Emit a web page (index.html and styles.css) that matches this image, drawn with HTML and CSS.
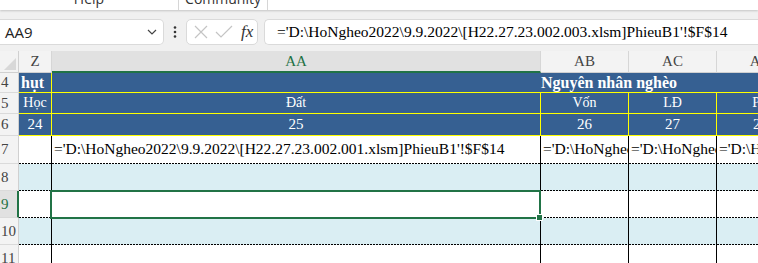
FILE: index.html
```html
<!DOCTYPE html>
<html lang="vi">
<head>
  <meta charset="UTF-8">
  <title>HoNgheo2022</title>
  <link rel="stylesheet" href="styles.css">
</head>
<body>
  <div class="ribbon-tail">
    <div class="tab tab-help"><span>Help</span></div>
    <div class="tab tab-community"><span>Community</span></div>
  </div>

  <div class="formula-bar">
    <div class="name-box">
      <span>AA9</span>
      <svg width="10" height="6" viewBox="0 0 10 6"><path d="M1 1 L5 5 L9 1" fill="none" stroke="#444" stroke-width="1.2"/></svg>
    </div>
    <div class="grip">
      <svg width="4" height="12" viewBox="0 0 4 12"><circle cx="2" cy="1.5" r="1.3" fill="#333"/><circle cx="2" cy="6" r="1.3" fill="#333"/><circle cx="2" cy="10.5" r="1.3" fill="#333"/></svg>
    </div>
    <div class="fx-box">
      <svg width="16" height="16" viewBox="0 0 16 16"><path d="M2 2 L14 14 M14 2 L2 14" stroke="#c4c4c4" stroke-width="1.2"/></svg>
      <svg width="18" height="16" viewBox="0 0 18 16"><path d="M1 8 L6 13 L17 2" fill="none" stroke="#c4c4c4" stroke-width="1.2"/></svg>
      <span class="fx">fx</span>
    </div>
    <div class="formula-input">='D:\HoNgheo2022\9.9.2022\[H22.27.23.002.003.xlsm]PhieuB1'!$F$14</div>
  </div>

  <div class="viewport">
    <div class="sheet">
      <div class="corner"></div>
      <div class="col-head">Z</div>
      <div class="col-head active">AA</div>
      <div class="col-head">AB</div>
      <div class="col-head">AC</div>
      <div class="col-head">AD</div>

      <div class="row-head">4</div>
      <div class="cell hdr bold left">hụt</div>
      <div class="cell hdr bold merged">Nguyên nhân nghèo</div>

      <div class="row-head">5</div>
      <div class="cell hdr">Học</div>
      <div class="cell hdr">Đất</div>
      <div class="cell hdr">Vốn</div>
      <div class="cell hdr">LĐ</div>
      <div class="cell hdr">PT</div>

      <div class="row-head">6</div>
      <div class="cell hdr num">24</div>
      <div class="cell hdr num">25</div>
      <div class="cell hdr num">26</div>
      <div class="cell hdr num">27</div>
      <div class="cell hdr num">28</div>

      <div class="row-head">7</div>
      <div class="cell data"></div>
      <div class="cell data">='D:\HoNgheo2022\9.9.2022\[H22.27.23.002.001.xlsm]PhieuB1'!$F$14</div>
      <div class="cell data">='D:\HoNgheo2022\9.9.2022\[H22.27.23.002.001.xlsm]PhieuB1'!$F$14</div>
      <div class="cell data">='D:\HoNgheo2022\9.9.2022\[H22.27.23.002.001.xlsm]PhieuB1'!$F$14</div>
      <div class="cell data">='D:\HoNgheo2022\9.9.2022\[H22.27.23.002.001.xlsm]PhieuB1'!$F$14</div>

      <div class="row-head">8</div>
      <div class="cell data band"></div>
      <div class="cell data band"></div>
      <div class="cell data band"></div>
      <div class="cell data band"></div>
      <div class="cell data band"></div>

      <div class="row-head active">9</div>
      <div class="cell data"></div>
      <div class="cell data selected"><span class="handle"></span></div>
      <div class="cell data"></div>
      <div class="cell data"></div>
      <div class="cell data"></div>

      <div class="row-head">10</div>
      <div class="cell data band"></div>
      <div class="cell data band"></div>
      <div class="cell data band"></div>
      <div class="cell data band"></div>
      <div class="cell data band"></div>

      <div class="row-head">11</div>
      <div class="cell data plain"></div>
      <div class="cell data plain"></div>
      <div class="cell data plain"></div>
      <div class="cell data plain"></div>
      <div class="cell data plain"></div>
    </div>
  </div>
</body>
</html>
```

FILE: styles.css
```css
body { margin: 0; width: 758px; height: 263px; overflow: hidden; background: #fff; font-family: "Liberation Serif", "Times New Roman", serif; }

.ribbon-tail { height: 10px; background: #fff; display: flex; overflow: hidden; box-shadow: 0 1px 2px rgba(0,0,0,0.18); position: relative; z-index: 1; }
.tab { height: 10px; display: flex; justify-content: center; overflow: hidden; border-right: 1px solid #d6d6d6; }
.tab span { font-family: "Open Sans", sans-serif; font-size: 14px; line-height: 14px; margin-top: -8px; color: #333; }
.tab-help { width: 178px; }
.tab-community { width: 88px; }

.formula-bar { height: 41px; background: #f0f0f0; display: flex; align-items: center; overflow: hidden; }
.name-box { width: 164px; height: 26px; box-sizing: border-box; background: #fff; border: 1px solid #dadada; border-left: none; border-radius: 0 5px 5px 0; display: flex; align-items: center; justify-content: space-between; padding: 0 6px 0 5px; font-family: "Open Sans", sans-serif; font-size: 15px; color: #222; margin-top: 2px; flex: none; }
.grip { width: 22px; display: flex; justify-content: center; margin-top: 2px; flex: none; }
.fx-box { width: 72px; height: 26px; box-sizing: border-box; background: #fff; border: 1px solid #dadada; border-radius: 5px; display: flex; align-items: center; gap: 6px; padding-left: 6px; margin-top: 2px; flex: none; }
.fx { font-family: "Liberation Serif", serif; font-style: italic; font-size: 17px; color: #333; margin-left: 2px; }
.formula-input { flex: 1; min-width: 0; height: 26px; box-sizing: border-box; margin-left: 6px; margin-top: 2px; background: #fff; border: 1px solid #dadada; border-right: none; border-radius: 5px 0 0 5px; padding-left: 12px; font-size: 15.5px; line-height: 24px; color: #000; white-space: nowrap; overflow: hidden; }

.viewport { width: 758px; overflow: hidden; }
.sheet { display: grid; grid-template-columns: 19px 33px 489px 88px 88px 88px; grid-template-rows: 22px 20px 21px 22px 28px 27px 27px 27px 27px; width: 805px; }
.corner { background: #f3f3f3; border-right: 1px solid #d0d0d0; border-bottom: 1px solid #d0d0d0; position: relative; }
.corner::after { content: ""; position: absolute; right: 2px; bottom: 2px; border-left: 12px solid transparent; border-bottom: 12px solid #d8d8d8; }
.col-head { background: #f3f3f3; border-right: 1px solid #d6d6d6; border-bottom: 1px solid #d0d0d0; text-align: center; font-size: 15px; line-height: 21px; color: #444; white-space: nowrap; overflow: hidden; }
.col-head.active { background: #e1e1e1; color: #1e7145; border-bottom: 2px solid #217346; line-height: 20px; }
.row-head { background: #f3f3f3; border-right: 1px solid #d0d0d0; border-bottom: 1px solid #dadada; font-size: 15px; color: #444; display: flex; align-items: center; padding-left: 1px; overflow: hidden; }
.row-head.active { background: #e1e1e1; color: #1e7145; border-right: 2px solid #217346; }

.cell { box-sizing: border-box; white-space: nowrap; overflow: hidden; min-width: 0; }
.hdr { background: #366092; color: #fff; border-right: 1px solid #ffff00; border-bottom: 1px solid #ffff00; font-size: 14px; display: flex; align-items: center; justify-content: center; }
.num { font-size: 15px; }
.bold { font-weight: bold; font-size: 16px; }
.left { justify-content: flex-start; padding-left: 2px; }
.merged { grid-column: 3 / 7; justify-content: flex-start; padding-left: 489px; border-right: none; }

.data { border-right: 1px solid #000; font-size: 15.5px; line-height: 26px; padding-left: 2px; color: #000; background: repeating-linear-gradient(to right, #000 0 2px, transparent 2px 3px) left bottom / 100% 1px no-repeat, #fff; }
.data.band { background: repeating-linear-gradient(to right, #000 0 2px, transparent 2px 3px) left bottom / 100% 1px no-repeat, #daeef3; }
.data.plain { background: #fff; }
.selected { position: relative; overflow: visible; }
.selected::before { content: ""; position: absolute; left: -2px; top: -1px; right: -1px; bottom: -1px; border: 2px solid #217346; }
.handle { position: absolute; right: -3px; bottom: -3px; width: 5px; height: 5px; background: #217346; border: 1px solid #fff; }
```
